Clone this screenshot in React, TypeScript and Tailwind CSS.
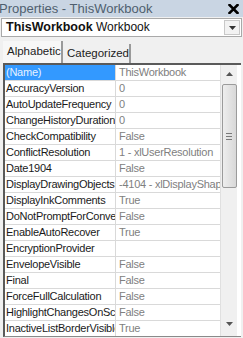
import React from 'react';

const rows: { name: string; value: string }[] = [
    { name: '(Name)', value: 'ThisWorkbook' },
    { name: 'AccuracyVersion', value: '0' },
    { name: 'AutoUpdateFrequency', value: '0' },
    { name: 'ChangeHistoryDuration', value: '0' },
    { name: 'CheckCompatibility', value: 'False' },
    { name: 'ConflictResolution', value: '1 - xlUserResolution' },
    { name: 'Date1904', value: 'False' },
    { name: 'DisplayDrawingObjects', value: '-4104 - xlDisplayShapes' },
    { name: 'DisplayInkComments', value: 'True' },
    { name: 'DoNotPromptForConvert', value: 'False' },
    { name: 'EnableAutoRecover', value: 'True' },
    { name: 'EncryptionProvider', value: '' },
    { name: 'EnvelopeVisible', value: 'False' },
    { name: 'Final', value: 'False' },
    { name: 'ForceFullCalculation', value: 'False' },
    { name: 'HighlightChangesOnScreen', value: 'False' },
    { name: 'InactiveListBorderVisible', value: 'True' },
];

const App: React.FC = () => {
    return (
        <div className="w-[243px] h-[338px] overflow-hidden bg-[#f0f0f0] flex flex-col" style={{ fontFamily: '"Liberation Sans", Arial, sans-serif' }}>
            {/* Title bar */}
            <div className="h-[17px] flex-none bg-[#c9d5e3] flex items-center justify-between pr-[4px]">
                <span className="text-[13px] leading-none text-[#4f5f6f] -ml-[1px] whitespace-nowrap">Properties - ThisWorkbook</span>
                <svg width="11" height="10" viewBox="0 0 11 10">
                    <path d="M1.5 1l8 8M9.5 1l-8 8" stroke="#000" strokeWidth="2.6" strokeLinecap="square" />
                </svg>
            </div>

            {/* Object dropdown */}
            <div className="mt-[1px] mx-[1px] h-[19px] flex-none bg-white border border-[#a9a9a9] flex items-center">
                <div className="flex-1 pl-[4px] text-[12px] leading-none text-[#111] whitespace-nowrap">
                    <span className="font-bold text-[12.5px]">ThisWorkbook</span> Workbook
                </div>
                <div className="w-[16px] h-[15px] mr-[1px] bg-[#f2f2f2] border border-[#c8c8c8] flex items-center justify-center">
                    <svg width="7" height="4" viewBox="0 0 7 4"><path d="M0 0h7L3.5 4z" fill="#333" /></svg>
                </div>
            </div>

            {/* Tabs */}
            <div className="h-[23px] mt-[3px] flex-none flex items-end pl-[3px]">
                <div className="w-[60px] h-[22px] pl-[4px] flex items-center bg-[#f7f7f7] text-[11.5px] text-[#222] border-r-2 border-[#9a9a9a]">Alphabetic</div>
                <div className="w-[68px] h-[19px] pl-[4px] flex items-center text-[11.5px] text-[#222] border-r-2 border-[#9a9a9a]">Categorized</div>
            </div>

            {/* Property grid */}
            <div className="flex-1 ml-[3px] mr-[2px] mb-[1px] border-l-2 border-t-2 border-b border-[#5a5a5a] border-b-[#8a8a8a] bg-white flex overflow-hidden">
                <div className="w-[215px] flex-none">
                    {rows.map((row, i) => (
                        <div key={row.name} className="h-[16px] flex border-b border-[#d9d9d9] text-[11px] tracking-[-0.25px] leading-none">
                            <div className={`w-[111px] flex-none flex items-center pl-[1px] whitespace-nowrap overflow-hidden border-r border-[#d9d9d9] ${i === 0 ? 'bg-[#3399ff] text-[#e6f2ff]' : 'text-[#1a1a1a]'}`}>
                                {row.name}
                            </div>
                            <div className="flex-1 flex items-center pl-[3px] whitespace-nowrap overflow-hidden text-[#808080]">
                                {row.value}
                            </div>
                        </div>
                    ))}
                </div>

                {/* Scrollbar */}
                <div className="w-[17px] flex-none bg-[#f0f0f0] border-l border-[#e0e0e0] flex flex-col items-center">
                    <div className="h-[17px] flex-none flex items-center justify-center">
                        <svg width="7" height="4" viewBox="0 0 7 4"><path d="M0 4h7L3.5 0z" fill="#555" /></svg>
                    </div>
                    <div className="w-[15px] h-[104px] flex-none mt-[2px] rounded-[2px] border border-[#9b9b9b] bg-gradient-to-r from-[#eeeeee] to-[#d8d8d8] flex flex-col items-center justify-center gap-[2px]">
                        <div className="w-[6px] h-px bg-[#7a7a7a]" />
                        <div className="w-[6px] h-px bg-[#7a7a7a]" />
                        <div className="w-[6px] h-px bg-[#7a7a7a]" />
                    </div>
                    <div className="flex-1" />
                    <div className="h-[17px] flex-none mb-[4px] flex items-center justify-center">
                        <svg width="7" height="4" viewBox="0 0 7 4"><path d="M0 0h7L3.5 4z" fill="#555" /></svg>
                    </div>
                </div>
            </div>
        </div>
    );
};

export default App;
